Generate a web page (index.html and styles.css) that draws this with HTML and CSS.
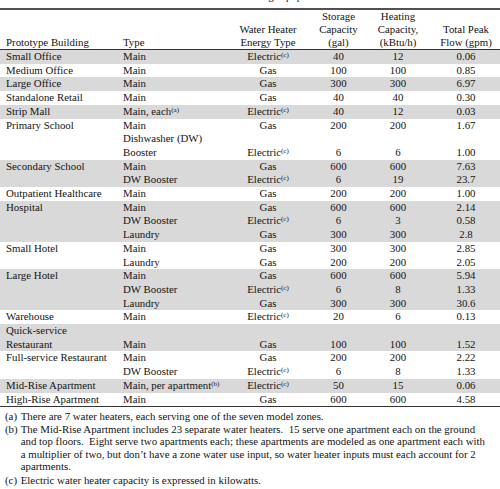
FILE: index.html
```html
<!DOCTYPE html>
<html lang="en">
<head>
<meta charset="utf-8">
<title>Service Water Heating Equipment</title>
<link rel="stylesheet" href="styles.css">
</head>
<body>
<div class="page">
  <div class="title-clip"><div class="title">Service Water Heating Equipment</div></div>
  <table class="equip">
    <colgroup>
      <col class="c-bldg"><col class="c-type"><col class="c-energy"><col class="c-stor"><col class="c-heat"><col class="c-flow">
    </colgroup>
    <thead>
      <tr>
        <th class="left first">Prototype Building</th>
        <th class="left second">Type</th>
        <th>Water Heater<br>Energy Type</th>
        <th>Storage<br>Capacity<br>(gal)</th>
        <th>Heating<br>Capacity,<br>(kBtu/h)</th>
        <th>Total Peak<br>Flow (gpm)</th>
      </tr>
    </thead>
    <tbody>
      <tr class="shade"><td class="first">Small Office</td><td class="second">Main</td><td>Electric<sup class="fn">(c)</sup></td><td>40</td><td>12</td><td>0.06</td></tr>
      <tr><td class="first">Medium Office</td><td class="second">Main</td><td>Gas</td><td>100</td><td>100</td><td>0.85</td></tr>
      <tr class="shade"><td class="first">Large Office</td><td class="second">Main</td><td>Gas</td><td>300</td><td>300</td><td>6.97</td></tr>
      <tr><td class="first">Standalone Retail</td><td class="second">Main</td><td>Gas</td><td>40</td><td>40</td><td>0.30</td></tr>
      <tr class="shade"><td class="first">Strip Mall</td><td class="second">Main, each<sup class="fn">(a)</sup></td><td>Electric<sup class="fn">(c)</sup></td><td>40</td><td>12</td><td>0.03</td></tr>
      <tr><td class="first">Primary School</td><td class="second">Main</td><td>Gas</td><td>200</td><td>200</td><td>1.67</td></tr>
      <tr><td class="first"></td><td class="second">Dishwasher (DW)</td><td></td><td></td><td></td><td></td></tr>
      <tr><td class="first"></td><td class="second">Booster</td><td>Electric<sup class="fn">(c)</sup></td><td>6</td><td>6</td><td>1.00</td></tr>
      <tr class="shade"><td class="first">Secondary School</td><td class="second">Main</td><td>Gas</td><td>600</td><td>600</td><td>7.63</td></tr>
      <tr class="shade"><td class="first"></td><td class="second">DW Booster</td><td>Electric<sup class="fn">(c)</sup></td><td>6</td><td>19</td><td>23.7</td></tr>
      <tr><td class="first">Outpatient Healthcare</td><td class="second">Main</td><td>Gas</td><td>200</td><td>200</td><td>1.00</td></tr>
      <tr class="shade"><td class="first">Hospital</td><td class="second">Main</td><td>Gas</td><td>600</td><td>600</td><td>2.14</td></tr>
      <tr class="shade"><td class="first"></td><td class="second">DW Booster</td><td>Electric<sup class="fn">(c)</sup></td><td>6</td><td>3</td><td>0.58</td></tr>
      <tr class="shade"><td class="first"></td><td class="second">Laundry</td><td>Gas</td><td>300</td><td>300</td><td>2.8</td></tr>
      <tr><td class="first">Small Hotel</td><td class="second">Main</td><td>Gas</td><td>300</td><td>300</td><td>2.85</td></tr>
      <tr><td class="first"></td><td class="second">Laundry</td><td>Gas</td><td>200</td><td>200</td><td>2.05</td></tr>
      <tr class="shade"><td class="first">Large Hotel</td><td class="second">Main</td><td>Gas</td><td>600</td><td>600</td><td>5.94</td></tr>
      <tr class="shade"><td class="first"></td><td class="second">DW Booster</td><td>Electric<sup class="fn">(c)</sup></td><td>6</td><td>8</td><td>1.33</td></tr>
      <tr class="shade"><td class="first"></td><td class="second">Laundry</td><td>Gas</td><td>300</td><td>300</td><td>30.6</td></tr>
      <tr><td class="first">Warehouse</td><td class="second">Main</td><td>Electric<sup class="fn">(c)</sup></td><td>20</td><td>6</td><td>0.13</td></tr>
      <tr class="shade"><td class="first">Quick-service</td><td class="second"></td><td></td><td></td><td></td><td></td></tr>
      <tr class="shade"><td class="first">Restaurant</td><td class="second">Main</td><td>Gas</td><td>100</td><td>100</td><td>1.52</td></tr>
      <tr><td class="first">Full-service Restaurant</td><td class="second">Main</td><td>Gas</td><td>200</td><td>200</td><td>2.22</td></tr>
      <tr><td class="first"></td><td class="second">DW Booster</td><td>Electric<sup class="fn">(c)</sup></td><td>6</td><td>8</td><td>1.33</td></tr>
      <tr class="shade"><td class="first">Mid-Rise Apartment</td><td class="second">Main, per apartment<sup class="fn">(b)</sup></td><td>Electric<sup class="fn">(c)</sup></td><td>50</td><td>15</td><td>0.06</td></tr>
      <tr class="last"><td class="first">High-Rise Apartment</td><td class="second">Main</td><td>Gas</td><td>600</td><td>600</td><td>4.58</td></tr>
    </tbody>
  </table>
  <div class="notes">
    <div class="note"><span class="label">(a)</span><span class="text">There are 7 water heaters, each serving one of the seven model zones.</span></div>
    <div class="note"><span class="label">(b)</span><span class="text">The Mid-Rise Apartment includes 23 separate water heaters.&nbsp; 15 serve one apartment each on the ground<br>and top floors.&nbsp; Eight serve two apartments each; these apartments are modeled as one apartment each with<br>a multiplier of two, but don’t have a zone water use input, so water heater inputs must each account for 2<br>apartments.</span></div>
    <div class="note note-c"><span class="label">(c)</span><span class="text">Electric water heater capacity is expressed in kilowatts.</span></div>
  </div>
</div>
</body>
</html>
```

FILE: styles.css
```css
html, body {
  margin: 0;
  padding: 0;
  background: #ffffff;
}

.page {
  width: 500px;
  font-family: "Liberation Serif", "Times New Roman", serif;
  font-size: 10.85px;
  color: #141414;
}

.title-clip {
  height: 8px;
  overflow: hidden;
}

.title {
  margin-top: -10px;
  padding-left: 176px;
  line-height: 13px;
  white-space: nowrap;
}

.equip {
  width: 500px;
  border-collapse: collapse;
  table-layout: fixed;
  border-top: 2px solid #505050;
}

.c-bldg { width: 118px; }
.c-type { width: 105px; }
.c-energy { width: 90px; }
.c-stor { width: 51px; }
.c-heat { width: 68px; }
.c-flow { width: 68px; }

.equip th {
  font-weight: normal;
  line-height: 13px;
  padding: 0;
  text-align: center;
  vertical-align: bottom;
  white-space: nowrap;
  border-bottom: 1px solid #333333;
}

.equip th.left { text-align: left; }

.equip td {
  line-height: 13.7px;
  height: 13.7px;
  padding: 0;
  text-align: center;
  white-space: nowrap;
  vertical-align: middle;
}

.equip .first {
  text-align: left;
  padding-left: 6px;
}

.equip .second {
  text-align: left;
  padding-left: 5px;
}

.equip tr.shade td {
  background: #d9d9d9;
}

.equip tr.last td {
  border-bottom: 1.5px solid #333333;
}

.fn {
  font-size: 7px;
  line-height: 0;
  vertical-align: 3.5px;
}

.notes {
  padding: 3px 0 0 5px;
  line-height: 12.4px;
}

.note {
  display: flex;
}

.note-c {
  margin-top: 2px;
}

.label {
  flex: 0 0 15.7px;
}

.text {
  white-space: nowrap;
}
```
